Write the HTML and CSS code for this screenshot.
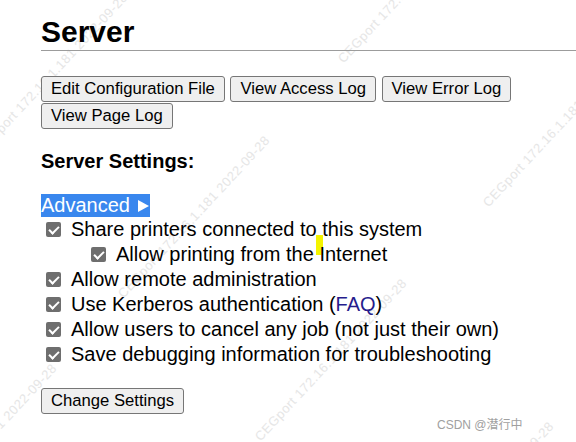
FILE: index.html
```html
<!DOCTYPE html>
<html lang="en">
<head>
<meta charset="utf-8">
<title>Server - CUPS</title>
<link rel="stylesheet" href="styles.css">
</head>
<body>
<div class="watermarks" aria-hidden="true">
  <span class="wm wm-a">CEGport 172.16.1.181 2022-09-28</span>
  <span class="wm wm-b">CEGport 172.16.1.181 2022-09-28</span>
  <span class="wm wm-c">CEGport 172.16.1.181 2022-09-28</span>
  <span class="wm wm-d">CEGport 172.16.1.181 2022-09-28</span>
  <span class="wm wm-e">CEGport 172.16.1.181 2022-09-28</span>
  <span class="wm wm-f">CEGport 172.16.1.181 2022-09-28</span>
  <span class="wm wm-g">CEGport 172.16.1.181 2022-09-28</span>
</div>
<span class="cursor-mark" aria-hidden="true"></span>
<main class="page">
  <h1 class="title">Server</h1>
  <div class="actions">
    <button class="btn" type="button">Edit Configuration File</button>
    <button class="btn" type="button">View Access Log</button>
    <button class="btn" type="button">View Error Log</button>
    <button class="btn" type="button">View Page Log</button>
  </div>
  <h2 class="section">Server Settings:</h2>
  <form class="settings">
    <div class="advanced">
      <span class="adv-label">Advanced<svg class="adv-arrow" width="11" height="12" viewBox="0 0 11 12"><path d="M0 0 L11 6 L0 12 Z" fill="#fff"/></svg></span>
    </div>
    <label class="opt"><input class="cb" type="checkbox" checked><span>Share printers connected to this system</span></label>
    <label class="opt indent"><input class="cb" type="checkbox" checked><span>Allow printing from the Internet</span></label>
    <label class="opt"><input class="cb" type="checkbox" checked><span>Allow remote administration</span></label>
    <label class="opt"><input class="cb" type="checkbox" checked><span>Use Kerberos authentication (<a class="faq" href="#">FAQ</a>)</span></label>
    <label class="opt"><input class="cb" type="checkbox" checked><span>Allow users to cancel any job (not just their own)</span></label>
    <label class="opt"><input class="cb" type="checkbox" checked><span>Save debugging information for troubleshooting</span></label>
    <div class="submit-row">
      <button class="btn" type="button">Change Settings</button>
    </div>
  </form>
</main>
<div class="csdn">CSDN @潜行中</div>
</body>
</html>
```
FILE: styles.css
```css
* { box-sizing: border-box; }

html, body { margin: 0; padding: 0; }

body {
  position: relative;
  width: 576px;
  height: 442px;
  overflow: hidden;
  background: #ffffff;
  color: #000000;
  font-family: "Liberation Sans", Arial, sans-serif;
  font-size: 20px;
}

.watermarks {
  position: absolute;
  inset: 0;
  overflow: hidden;
  z-index: 0;
  pointer-events: none;
}

.wm {
  position: absolute;
  white-space: nowrap;
  font-family: "Liberation Sans", Arial, sans-serif;
  font-size: 13px;
  line-height: 13px;
  letter-spacing: 0.5px;
  color: #e6e6e6;
  transform-origin: 0 100%;
  transform: rotate(-47deg);
}
.wm-a { left: -17px; top: 144px; }
.wm-b { left: 345px; top: 52px; }
.wm-c { left: 490px; top: 196px; }
.wm-d { left: 125px; top: 287px; }
.wm-e { left: 262px; top: 430px; }
.wm-f { left: -88px; top: 515px; }
.wm-g { left: 409px; top: 573px; }

.cursor-mark {
  position: absolute;
  left: 316px;
  top: 235px;
  width: 7px;
  height: 20px;
  background: #f4f400;
  z-index: 0;
}

.page {
  position: relative;
  z-index: 1;
  padding: 15px 0 0 41px;
}

.title {
  margin: 0;
  padding-bottom: 1px;
  font-size: 30px;
  font-weight: bold;
  line-height: 34px;
  border-bottom: 1px solid #9c9c9c;
}

.actions {
  display: flex;
  flex-wrap: wrap;
  gap: 1px 5.5px;
  margin-top: 25px;
}

.btn {
  height: 26px;
  padding: 0 9px;
  border: 1px solid #767676;
  border-radius: 3px;
  background: #efefef;
  color: #000000;
  font-family: "Liberation Sans", Arial, sans-serif;
  font-size: 16.67px;
  line-height: 24px;
}

.section {
  margin: 21px 0 21px;
  font-size: 20px;
  font-weight: bold;
  line-height: 23px;
}

.settings {
  margin: 0;
}

.advanced {
  display: flex;
  height: 23px;
}

.adv-label {
  display: inline-flex;
  align-items: center;
  gap: 8px;
  padding-right: 1px;
  height: 23px;
  line-height: 23px;
  background: #3987ee;
  color: #ffffff;
}

.adv-arrow {
  display: block;
}

.opt {
  display: flex;
  align-items: center;
  height: 25px;
  line-height: 25px;
  white-space: nowrap;
}

.opt.indent {
  padding-left: 45px;
}

.cb {
  appearance: none;
  -webkit-appearance: none;
  position: relative;
  flex: none;
  width: 15px;
  height: 15px;
  margin: 0 10px 0 5px;
  border-radius: 2px;
  background: #6e6e6e;
}

.cb:checked::after {
  content: "";
  position: absolute;
  left: 5px;
  top: 2px;
  width: 4px;
  height: 8px;
  border-right: 2px solid #ffffff;
  border-bottom: 2px solid #ffffff;
  transform: rotate(45deg);
}

.faq {
  color: #261c8c;
  text-decoration: none;
}

.submit-row {
  margin-top: 21px;
}

.csdn {
  position: absolute;
  left: 437px;
  top: 417px;
  z-index: 2;
  font-family: "Liberation Sans", "Noto Sans CJK SC", sans-serif;
  font-size: 12px;
  line-height: 16px;
  color: #a0a0a0;
  white-space: nowrap;
}
```
